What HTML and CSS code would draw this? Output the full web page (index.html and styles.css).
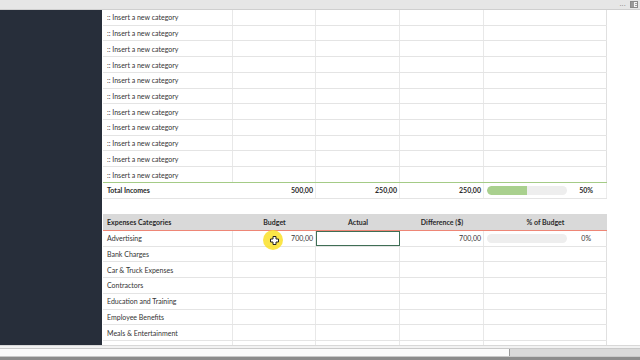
FILE: index.html
```html
<!DOCTYPE html>
<html>
<head>
<meta charset="utf-8">
<link rel="stylesheet" href="styles.css">
</head>
<body>
<div class="app">
  <div class="topbar">
    <span class="dots">···</span>
    <svg class="panel-ico" width="8" height="7" viewBox="0 0 8 7"><rect x="0.5" y="0.5" width="7" height="6" fill="#f4f4f4" stroke="#8a8a8a"/><rect x="1" y="1" width="3" height="5" fill="#9a9a9a"/><line x1="5" y1="2.5" x2="7" y2="2.5" stroke="#8a8a8a" stroke-width="0.8"/><line x1="5" y1="4.5" x2="7" y2="4.5" stroke="#8a8a8a" stroke-width="0.8"/></svg>
  </div>
  <div class="main">
    <aside class="sidebar"></aside>
    <div class="sheet">
      <div class="table">
        <div class="row"><div class="c">:: Insert a new category</div><div class="c"></div><div class="c"></div><div class="c"></div><div class="c last"></div></div>
        <div class="row"><div class="c">:: Insert a new category</div><div class="c"></div><div class="c"></div><div class="c"></div><div class="c last"></div></div>
        <div class="row"><div class="c">:: Insert a new category</div><div class="c"></div><div class="c"></div><div class="c"></div><div class="c last"></div></div>
        <div class="row"><div class="c">:: Insert a new category</div><div class="c"></div><div class="c"></div><div class="c"></div><div class="c last"></div></div>
        <div class="row"><div class="c">:: Insert a new category</div><div class="c"></div><div class="c"></div><div class="c"></div><div class="c last"></div></div>
        <div class="row"><div class="c">:: Insert a new category</div><div class="c"></div><div class="c"></div><div class="c"></div><div class="c last"></div></div>
        <div class="row"><div class="c">:: Insert a new category</div><div class="c"></div><div class="c"></div><div class="c"></div><div class="c last"></div></div>
        <div class="row"><div class="c">:: Insert a new category</div><div class="c"></div><div class="c"></div><div class="c"></div><div class="c last"></div></div>
        <div class="row"><div class="c">:: Insert a new category</div><div class="c"></div><div class="c"></div><div class="c"></div><div class="c last"></div></div>
        <div class="row"><div class="c">:: Insert a new category</div><div class="c"></div><div class="c"></div><div class="c"></div><div class="c last"></div></div>
        <div class="row pre-total"><div class="c">:: Insert a new category</div><div class="c"></div><div class="c"></div><div class="c"></div><div class="c last"></div></div>
        <div class="row total">
          <div class="c">Total Incomes</div>
          <div class="c num">500,00</div>
          <div class="c num">250,00</div>
          <div class="c num">250,00</div>
          <div class="c last pct"><div class="bar"><div class="fill" style="width:50%"></div></div><span class="pv">50%</span></div>
        </div>
        <div class="spacer"></div>
        <div class="row head">
          <div class="c left">Expenses Categories</div>
          <div class="c">Budget</div>
          <div class="c">Actual</div>
          <div class="c">Difference ($)</div>
          <div class="c">% of Budget</div>
        </div>
        <div class="row">
          <div class="c">Advertising</div>
          <div class="c num">700,00</div>
          <div class="c sel"></div>
          <div class="c num">700,00</div>
          <div class="c last pct"><div class="bar"><div class="fill" style="width:0%"></div></div><span class="pv zero">0%</span></div>
        </div>
        <div class="row"><div class="c">Bank Charges</div><div class="c"></div><div class="c"></div><div class="c"></div><div class="c last"></div></div>
        <div class="row"><div class="c">Car &amp; Truck Expenses</div><div class="c"></div><div class="c"></div><div class="c"></div><div class="c last"></div></div>
        <div class="row"><div class="c">Contractors</div><div class="c"></div><div class="c"></div><div class="c"></div><div class="c last"></div></div>
        <div class="row"><div class="c">Education and Training</div><div class="c"></div><div class="c"></div><div class="c"></div><div class="c last"></div></div>
        <div class="row"><div class="c">Employee Benefits</div><div class="c"></div><div class="c"></div><div class="c"></div><div class="c last"></div></div>
        <div class="row"><div class="c">Meals &amp; Entertainment</div><div class="c"></div><div class="c"></div><div class="c"></div><div class="c last"></div></div>
        <div class="row"><div class="c"></div><div class="c"></div><div class="c"></div><div class="c"></div><div class="c last"></div></div>
      </div>
      <div class="cursor">
        <svg width="9" height="9" viewBox="0 0 9 9"><path d="M3 0.5h3v2.5h2.5v3H6v2.5H3V6H0.5V3H3z" fill="#fff" stroke="#222" stroke-width="1"/></svg>
      </div>
    </div>
  </div>
  <div class="bottom">
    <div class="band"></div>
    <div class="hscroll"><div class="thumb"></div></div>
    <div class="edge"></div>
  </div>
</div>
</body>
</html>
```
FILE: styles.css
```css
* { box-sizing: border-box; }
html, body { margin: 0; padding: 0; }
body {
  width: 640px;
  height: 360px;
  overflow: hidden;
  background: #ffffff;
  font-family: Lato, "Open Sans", "Liberation Sans", sans-serif;
  font-size: 7px;
  color: #333333;
}
.app { display: flex; flex-direction: column; height: 360px; }

.topbar {
  height: 10px;
  background: #e6e6e6;
  border-bottom: 1px solid #cfcfcf;
  display: flex;
  align-items: center;
  justify-content: flex-end;
  padding-right: 2px;
  gap: 4px;
}
.dots { color: #8a8a8a; font-size: 6px; letter-spacing: 0.5px; line-height: 6px; }
.panel-ico { display: block; }

.main { display: flex; height: 335px; overflow: hidden; }
.sidebar { width: 102px; flex: none; background: #272e3a; }
.sheet { position: relative; flex: 1; background: #fff; padding-left: 1px; overflow: hidden; }

.table { width: 504px; }
.row {
  display: grid;
  grid-template-columns: 130px 83px 84px 84px 123px;
  height: 15.73px;
  border-bottom: 1px solid #e4e4e4;
}
.c {
  border-right: 1px solid #e8e8e8;
  padding: 0 4px;
  display: flex;
  align-items: center;
  white-space: nowrap;
  overflow: hidden;
}
.c.last { border-right: 1px solid #e0e0e0; }
.num { justify-content: flex-end; padding-right: 2px; }

.row.pre-total { border-bottom: 1px solid #a4cb86; }
.row.total { font-weight: 700; height: 16px; color: #2a2a2a; }
.row.total .c { border-right-color: #ececec; }
.row.total .c:first-child { border-right-color: transparent; }

.spacer { height: 15px; }

.row.head {
  background: #d9d9d9;
  border-bottom: 1px solid #ee8676;
  font-weight: 700;
  height: 17px;
  color: #2a2a2a;
}
.row.head .c { border-right: none; justify-content: center; }
.row.head .c.left { justify-content: flex-start; }

.pct { padding: 0 13px 0 3px; }
.bar {
  width: 80px;
  height: 9px;
  border-radius: 5px;
  background: #eeeeee;
  overflow: hidden;
  flex: none;
}
.fill { height: 100%; background: #a9d08e; border-radius: 5px 0 0 5px; }
.pv { flex: 1; text-align: right; }
.pv.zero { padding-right: 2px; }

.sel {
  outline: 1.5px solid #3f6e55;
  outline-offset: -1px;
  position: relative;
}
.sel::after {
  content: "";
  position: absolute;
  right: -2px;
  bottom: -2px;
  width: 3px;
  height: 3px;
  background: #3f6e55;
}

.cursor {
  position: absolute;
  left: 161px;
  top: 220px;
  width: 20px;
  height: 20px;
  border-radius: 50%;
  background: rgba(250, 225, 40, 0.85);
  display: flex;
  align-items: center;
  justify-content: center;
}
.cursor svg { display: block; margin: 1px 0 0 2px; }

.bottom { height: 15px; display: flex; flex-direction: column; }
.band { height: 3px; background: #f2f2f2; border-top: 1px solid #d8d8d8; }
.hscroll {
  height: 9px;
  background: #d9d9d9;
  border-top: 1px solid #c9c9c9;
  border-bottom: 1px solid #c9c9c9;
}
.thumb {
  width: 510px;
  height: 100%;
  background: #fbfbfb;
  border-right: 1px solid #9a9a9a;
}
.edge { flex: 1; background: #8c8c8c; }
```
